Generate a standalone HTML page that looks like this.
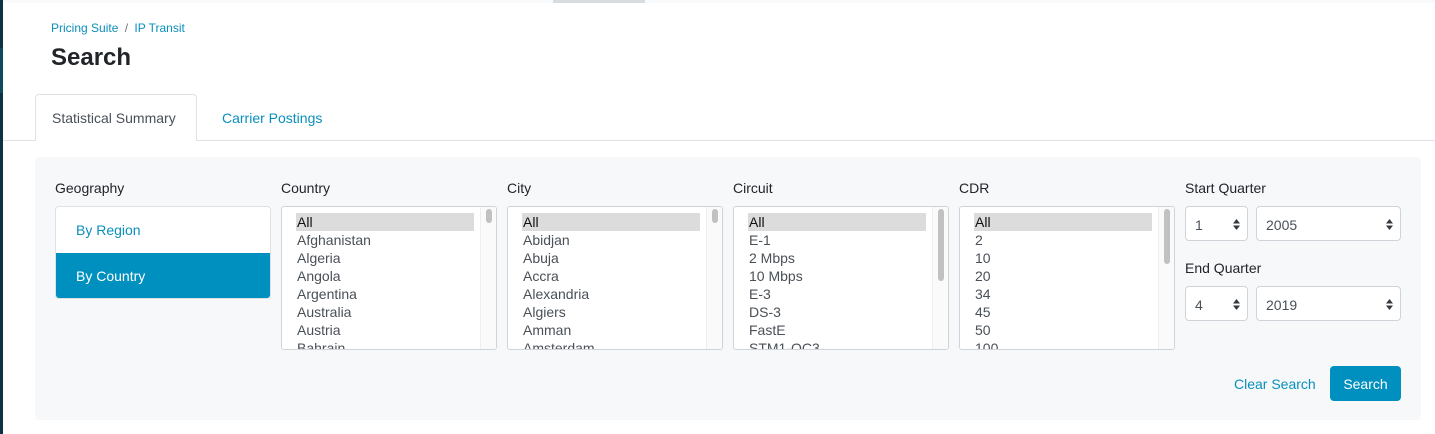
<!DOCTYPE html>
<html><head><meta charset="utf-8"><style>
*{box-sizing:border-box;margin:0;padding:0}
body{width:1435px;height:434px;overflow:hidden;background:#fff;font-family:"Liberation Sans",sans-serif;color:#212529;position:relative}
.a{position:absolute}
.blue{color:#0a8fbd}
.lbl{font-size:14px;color:#212529}
.list{position:absolute;top:206px;width:216px;height:144px;background:#fff;border:1px solid #ced4da;border-radius:3px;overflow:hidden}
.list .it{position:absolute;left:14px;font-size:14px;color:#495057;line-height:18px;height:18px;padding-left:1px}
.list .sel{background:#dcdcdc;width:178px;color:#111}
.list .sb{position:absolute;right:0;top:0;width:16px;height:142px;border-left:1px solid #eee;background:#fafafa}
.list .th{position:absolute;right:4px;top:2px;width:6px;border-radius:3px;background:#c1c1c1}
.sel2{position:absolute;height:35px;background:#fff;border:1px solid #ced4da;border-radius:4px;font-size:14px;color:#495057;padding:10px 0 0 9px}
.arr{position:absolute;right:7px;top:11px;width:7px;height:13px}
</style></head><body>
<div class="a" style="left:0;top:0;width:3px;height:434px;background:#0c3343"></div>
<div class="a" style="left:0;top:48px;width:3px;height:45px;background:#0f4a5c"></div>
<div class="a" style="left:3px;top:0;width:1432px;height:3px;background:#f8f9fa"></div>
<div class="a" style="left:553px;top:0;width:92px;height:3px;background:#d8dce1"></div>

<div class="a blue" style="left:51px;top:21px;font-size:12px">Pricing Suite <span style="color:#6c757d;margin:0 3px">/</span> IP Transit</div>
<div class="a" style="left:51px;top:44px;font-size:24px;font-weight:bold;color:#212529">Search</div>

<div class="a" style="left:3px;top:140px;width:1432px;height:1px;background:#dee2e6"></div>
<div class="a" style="left:35px;top:94px;width:162px;height:47px;background:#fff;border:1px solid #dee2e6;border-bottom:none;border-radius:4px 4px 0 0;font-size:14px;color:#495057;padding:15px 0 0 16px">Statistical Summary</div>
<div class="a blue" style="left:222px;top:110px;font-size:14px">Carrier Postings</div>

<div class="a" style="left:35px;top:157px;width:1386px;height:263px;background:#f7f8fa;border-radius:4px"></div>

<div class="a lbl" style="left:55px;top:180px">Geography</div>
<div class="a lbl" style="left:281px;top:180px">Country</div>
<div class="a lbl" style="left:507px;top:180px">City</div>
<div class="a lbl" style="left:733px;top:180px">Circuit</div>
<div class="a lbl" style="left:959px;top:180px">CDR</div>
<div class="a lbl" style="left:1185px;top:180px">Start Quarter</div>
<div class="a lbl" style="left:1185px;top:260px">End Quarter</div>

<div class="a" style="left:55px;top:206px;width:216px;height:93px;border:1px solid #dee2e6;border-radius:4px;background:#fff;overflow:hidden">
 <div class="blue" style="height:46px;font-size:14px;padding:15px 0 0 20px">By Region</div>
 <div style="height:47px;background:#0090bf;color:#fff;font-size:14px;padding:15px 0 0 20px">By Country</div>
</div>

<div class="list" style="left:281px">
 <div class="it sel" style="top:6px">All</div><div class="it" style="top:24px">Afghanistan</div><div class="it" style="top:42px">Algeria</div><div class="it" style="top:60px">Angola</div><div class="it" style="top:78px">Argentina</div><div class="it" style="top:96px">Australia</div><div class="it" style="top:114px">Austria</div><div class="it" style="top:132px">Bahrain</div>
 <div class="sb"><div class="th" style="height:14px"></div></div>
</div>
<div class="list" style="left:507px">
 <div class="it sel" style="top:6px">All</div><div class="it" style="top:24px">Abidjan</div><div class="it" style="top:42px">Abuja</div><div class="it" style="top:60px">Accra</div><div class="it" style="top:78px">Alexandria</div><div class="it" style="top:96px">Algiers</div><div class="it" style="top:114px">Amman</div><div class="it" style="top:132px">Amsterdam</div>
 <div class="sb"><div class="th" style="height:14px"></div></div>
</div>
<div class="list" style="left:733px">
 <div class="it sel" style="top:6px">All</div><div class="it" style="top:24px">E-1</div><div class="it" style="top:42px">2 Mbps</div><div class="it" style="top:60px">10 Mbps</div><div class="it" style="top:78px">E-3</div><div class="it" style="top:96px">DS-3</div><div class="it" style="top:114px">FastE</div><div class="it" style="top:132px">STM1-OC3</div>
 <div class="sb"><div class="th" style="height:72px"></div></div>
</div>
<div class="list" style="left:959px">
 <div class="it sel" style="top:6px">All</div><div class="it" style="top:24px">2</div><div class="it" style="top:42px">10</div><div class="it" style="top:60px">20</div><div class="it" style="top:78px">34</div><div class="it" style="top:96px">45</div><div class="it" style="top:114px">50</div><div class="it" style="top:132px">100</div>
 <div class="sb"><div class="th" style="height:55px"></div></div>
</div>

<div class="sel2" style="left:1185px;top:206px;width:63px">1<svg class="arr" viewBox="0 0 7 13"><path d="M3.5 1L7 5.5H0Z M3.5 12L7 7.5H0Z" fill="#343a40"/></svg></div>
<div class="sel2" style="left:1256px;top:206px;width:145px">2005<svg class="arr" viewBox="0 0 7 13"><path d="M3.5 1L7 5.5H0Z M3.5 12L7 7.5H0Z" fill="#343a40"/></svg></div>
<div class="sel2" style="left:1185px;top:286px;width:63px">4<svg class="arr" viewBox="0 0 7 13"><path d="M3.5 1L7 5.5H0Z M3.5 12L7 7.5H0Z" fill="#343a40"/></svg></div>
<div class="sel2" style="left:1256px;top:286px;width:145px">2019<svg class="arr" viewBox="0 0 7 13"><path d="M3.5 1L7 5.5H0Z M3.5 12L7 7.5H0Z" fill="#343a40"/></svg></div>

<div class="a blue" style="left:1234px;top:376px;font-size:14px">Clear Search</div>
<div class="a" style="left:1330px;top:366px;width:71px;height:35px;background:#0090bf;border-radius:4px;color:#fff;font-size:14px;text-align:center;padding-top:10px">Search</div>
</body></html>
